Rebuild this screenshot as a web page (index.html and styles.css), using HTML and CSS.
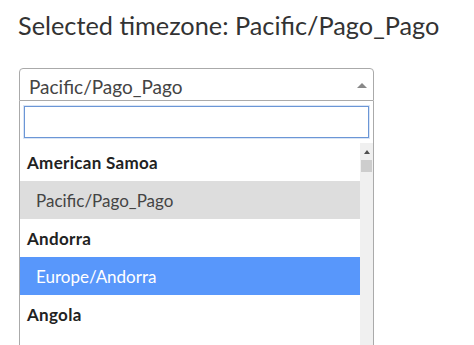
FILE: index.html
```html
<!DOCTYPE html>
<html lang="en">
	<head>
		<meta charset="UTF-8" />
		<meta name="viewport" content="width=device-width, initial-scale=1.0" />
		<title>Timezone Select</title>
		<link rel="stylesheet" href="styles.css">
	</head>
	<body>
		<div class="page">
			<h2 class="selected-title">Selected timezone: Pacific/Pago_Pago</h2>
			<div class="tz-select tz-select-open">
				<div class="tz-selection">
					<span class="tz-selection-text">Pacific/Pago_Pago</span>
					<span class="tz-arrow"></span>
				</div>
				<div class="tz-dropdown">
					<div class="tz-search">
						<input type="text" class="tz-search-field" autocomplete="off" />
					</div>
					<div class="tz-results-wrap">
						<ul class="tz-results">
							<li class="tz-group"><strong class="tz-group-label">American Samoa</strong>
								<ul><li class="tz-option tz-option-selected">Pacific/Pago_Pago</li></ul></li>
							<li class="tz-group"><strong class="tz-group-label">Andorra</strong>
								<ul><li class="tz-option tz-option-highlighted">Europe/Andorra</li></ul></li>
							<li class="tz-group"><strong class="tz-group-label">Angola</strong>
								<ul><li class="tz-option">Africa/Luanda</li></ul></li>
						</ul>
						<div class="tz-scrollbar">
							<span class="tz-scroll-btn"><span class="tz-scroll-up"></span></span>
							<span class="tz-scroll-thumb"></span>
						</div>
					</div>
				</div>
			</div>
		</div>
	</body>
</html>
```

FILE: styles.css
```css
body {
	margin: 0;
	height: 100vh;
	overflow: hidden;
	background-color: #fff;
	font-family: Lato, "Open Sans", sans-serif;
}

.page {
	padding: 11px 18px 0;
}

.selected-title {
	margin: 0 0 28px;
	font-size: 25.3px;
	line-height: 29px;
	font-weight: 400;
	color: #333;
}

.tz-select {
	width: 355px;
	margin-left: 1px;
}

.tz-selection {
	display: flex;
	justify-content: space-between;
	align-items: center;
	padding: 5px 6px 0 9px;
	border: 1px solid #aaa;
	border-radius: 4px 4px 0 0;
	background-color: #fff;
}
.tz-selection-text {
	font-size: 19px;
	line-height: 26px;
	color: #444;
}
.tz-arrow {
	width: 0;
	height: 0;
	margin-bottom: 3px;
	border-style: solid;
	border-width: 0 5px 5px 5px;
	border-color: transparent transparent #888 transparent;
}

.tz-dropdown {
	border: 1px solid #aaa;
	border-top: none;
	background-color: #fff;
}
.tz-search {
	padding: 5px 4px;
}
.tz-search-field {
	display: block;
	box-sizing: border-box;
	width: 100%;
	height: 32px;
	padding: 4px;
	border: 1px solid #6b96d6;
	box-shadow: 0 0 0 1px rgba(107, 150, 214, 0.25);
	outline: none;
	font: inherit;
}

.tz-results-wrap {
	display: flex;
	height: 202px;
	overflow: hidden;
}
.tz-results {
	flex: 1;
	list-style: none;
	margin: 0;
	padding: 0;
	overflow: hidden;
	font-size: 17px;
	line-height: 20px;
}
.tz-results ul {
	list-style: none;
	margin: 0;
	padding: 0;
}
.tz-group-label {
	display: block;
	padding: 10px 7px 8px;
	font-weight: 700;
	letter-spacing: 0.3px;
	color: #222;
}
.tz-option {
	padding: 10px 7px 8px 16px;
	color: #444;
}
.tz-option-selected {
	background-color: #ddd;
}
.tz-option-highlighted {
	background-color: #5897fb;
	color: #fff;
}

.tz-scrollbar {
	display: flex;
	flex-direction: column;
	width: 13px;
	background-color: #f0f0f0;
}
.tz-scroll-btn {
	display: flex;
	justify-content: center;
	align-items: center;
	height: 17px;
}
.tz-scroll-up {
	width: 0;
	height: 0;
	border-style: solid;
	border-width: 0 3px 4px 3px;
	border-color: transparent transparent #505050 transparent;
}
.tz-scroll-thumb {
	height: 12px;
	margin: 0 1px;
	background-color: #cdcdcd;
}
```
